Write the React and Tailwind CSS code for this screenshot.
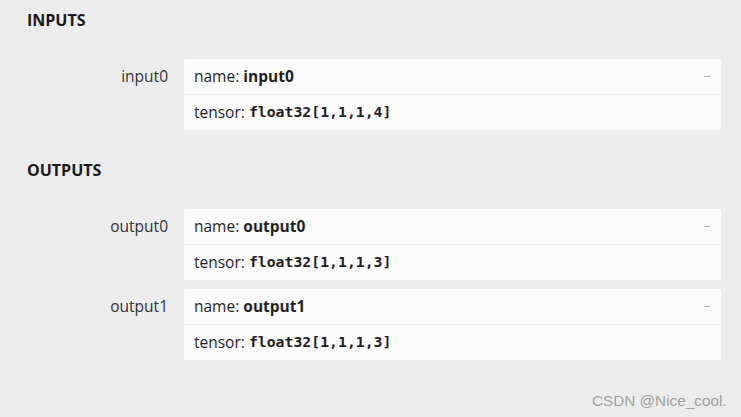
import React from "react";

const sans = { fontFamily: '"Open Sans", "Noto Sans", sans-serif' };

function Card({ name, type }) {
  return (
    <div className="flex-1 bg-[#fcfcfc] rounded-[2px] text-[15.5px] text-[#1f1f1f]">
      <div className="h-[36px] flex items-center justify-between pl-[10px] pr-[11px] border-b border-[#ececec]">
        <div>
          <span>name: </span>
          <span className="font-bold">{name}</span>
        </div>
        <div className="w-[6px] h-px bg-[#b5aaa0]" />
      </div>
      <div className="h-[35px] flex items-center pl-[10px]">
        <span>tensor:&nbsp;</span>
        <span className="font-bold text-[14.8px]" style={{ fontFamily: '"DejaVu Sans Mono", "Liberation Mono", monospace' }}>{type}</span>
      </div>
    </div>
  );
}

function Row({ label, name, type }) {
  return (
    <div className="flex gap-[16px]">
      <div className="w-[141px] text-right text-[15.5px] text-[#333] pt-[6px]">{label}</div>
      <Card name={name} type={type} />
    </div>
  );
}

export default function App() {
  return (
    <div className="relative w-[741px] h-[417px] bg-[#ececec] pl-[27px] pr-[20px]" style={sans}>
      <div className="pt-[9px] text-[16px] font-bold text-[#1a1a1a] leading-[22px]">INPUTS</div>
      <div className="mt-[28px] flex flex-col gap-[9px]">
        <Row label="input0" name="input0" type="float32[1,1,1,4]" />
      </div>
      <div className="mt-[29px] text-[16px] font-bold text-[#1a1a1a] leading-[22px]">OUTPUTS</div>
      <div className="mt-[28px] flex flex-col gap-[9px]">
        <Row label="output0" name="output0" type="float32[1,1,1,3]" />
        <Row label="output1" name="output1" type="float32[1,1,1,3]" />
      </div>
      <div
        className="absolute left-[592px] top-[390px] text-[15.3px] text-[#a0a0a0]"
        style={{ fontFamily: '"Liberation Sans", Arial, sans-serif' }}
      >
        CSDN @Nice_cool.
      </div>
    </div>
  );
}
